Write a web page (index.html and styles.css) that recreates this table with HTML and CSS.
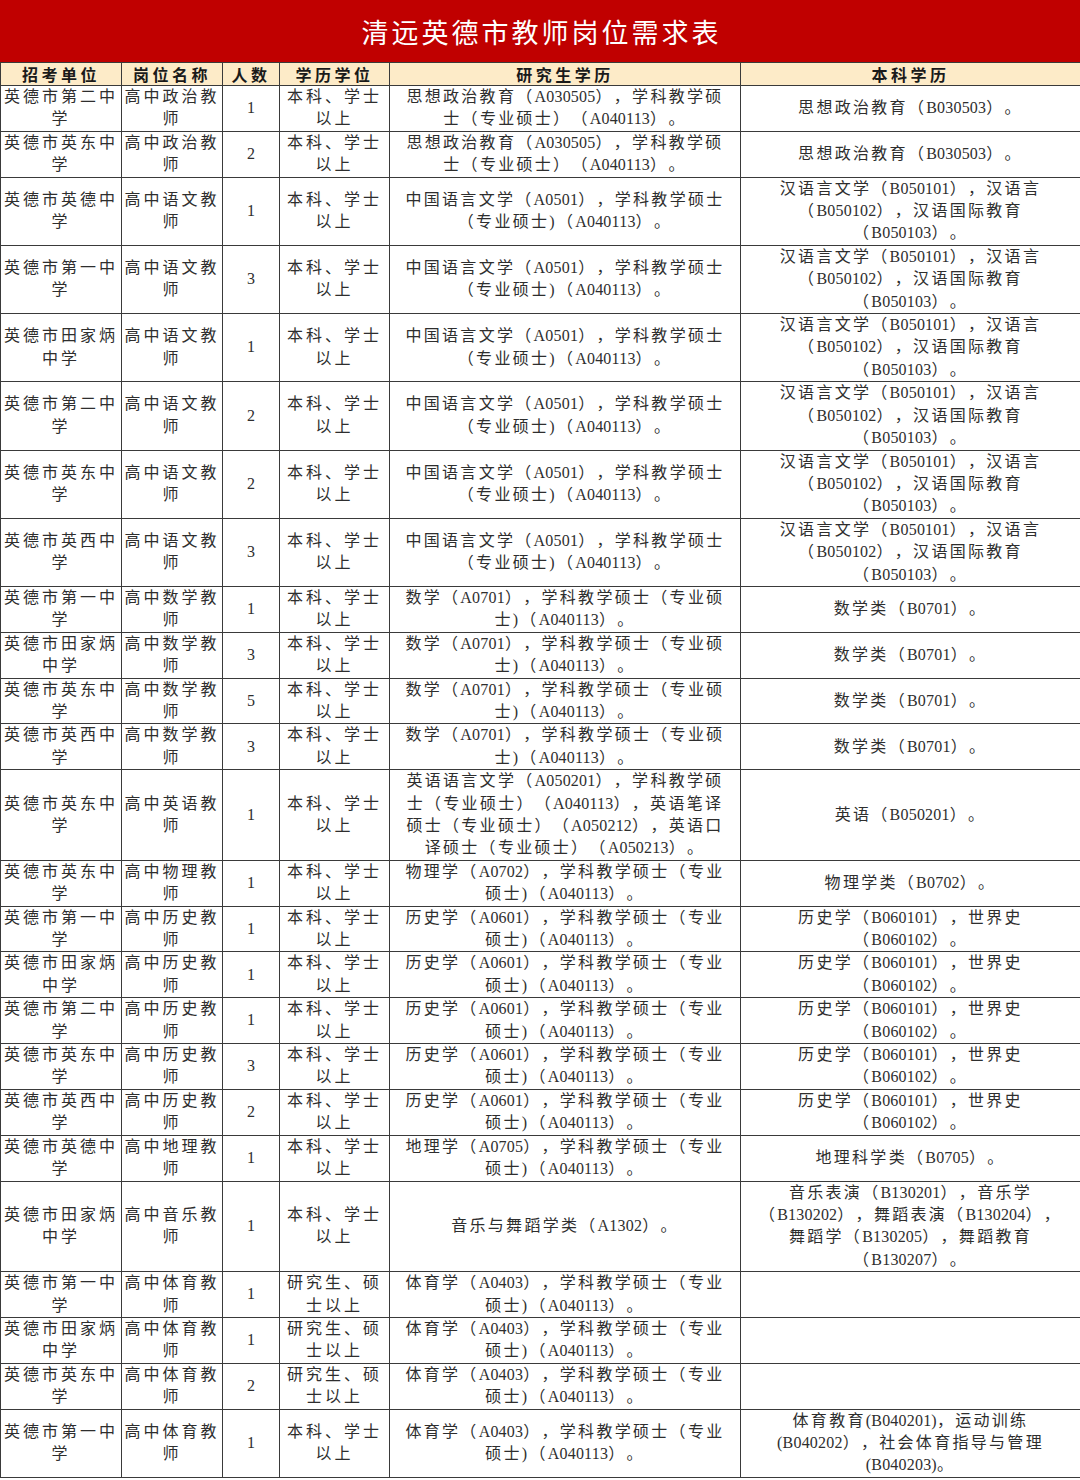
FILE: index.html
```html
<!DOCTYPE html>
<html lang="zh-CN">
<head>
<meta charset="utf-8">
<title>清远英德市教师岗位需求表</title>
<link rel="stylesheet" href="styles.css">
</head>
<body>
<div class="page">
  <div class="title">清远英德市教师岗位需求表</div>
  <table class="grid">
    <colgroup>
      <col class="c1"><col class="c2"><col class="c3"><col class="c4"><col class="c5"><col class="c6">
    </colgroup>
    <thead>
      <tr class="head">
        <th>招考单位</th><th>岗位名称</th><th>人数</th><th>学历学位</th><th>研究生学历</th><th>本科学历</th>
      </tr>
    </thead>
    <tbody>
      <tr><td class="w">英德市第二中<br>学</td><td class="w">高中政治教<br>师</td><td class="n">1</td><td class="w">本科、学士<br>以上</td><td>思想政治教育（<span class="c">A030505</span>），学科教学硕<br>士（专业硕士）（<span class="c">A040113</span>）。</td><td>思想政治教育（<span class="c">B030503</span>）。</td></tr>
      <tr><td class="w">英德市英东中<br>学</td><td class="w">高中政治教<br>师</td><td class="n">2</td><td class="w">本科、学士<br>以上</td><td>思想政治教育（<span class="c">A030505</span>），学科教学硕<br>士（专业硕士）（<span class="c">A040113</span>）。</td><td>思想政治教育（<span class="c">B030503</span>）。</td></tr>
      <tr><td class="w">英德市英德中<br>学</td><td class="w">高中语文教<br>师</td><td class="n">1</td><td class="w">本科、学士<br>以上</td><td>中国语言文学（<span class="c">A0501</span>），学科教学硕士<br>（专业硕士)（<span class="c">A040113</span>）。</td><td>汉语言文学（<span class="c">B050101</span>），汉语言<br>（<span class="c">B050102</span>），汉语国际教育<br>（<span class="c">B050103</span>）。</td></tr>
      <tr><td class="w">英德市第一中<br>学</td><td class="w">高中语文教<br>师</td><td class="n">3</td><td class="w">本科、学士<br>以上</td><td>中国语言文学（<span class="c">A0501</span>），学科教学硕士<br>（专业硕士)（<span class="c">A040113</span>）。</td><td>汉语言文学（<span class="c">B050101</span>），汉语言<br>（<span class="c">B050102</span>），汉语国际教育<br>（<span class="c">B050103</span>）。</td></tr>
      <tr><td class="w">英德市田家炳<br>中学</td><td class="w">高中语文教<br>师</td><td class="n">1</td><td class="w">本科、学士<br>以上</td><td>中国语言文学（<span class="c">A0501</span>），学科教学硕士<br>（专业硕士)（<span class="c">A040113</span>）。</td><td>汉语言文学（<span class="c">B050101</span>），汉语言<br>（<span class="c">B050102</span>），汉语国际教育<br>（<span class="c">B050103</span>）。</td></tr>
      <tr><td class="w">英德市第二中<br>学</td><td class="w">高中语文教<br>师</td><td class="n">2</td><td class="w">本科、学士<br>以上</td><td>中国语言文学（<span class="c">A0501</span>），学科教学硕士<br>（专业硕士)（<span class="c">A040113</span>）。</td><td>汉语言文学（<span class="c">B050101</span>），汉语言<br>（<span class="c">B050102</span>），汉语国际教育<br>（<span class="c">B050103</span>）。</td></tr>
      <tr><td class="w">英德市英东中<br>学</td><td class="w">高中语文教<br>师</td><td class="n">2</td><td class="w">本科、学士<br>以上</td><td>中国语言文学（<span class="c">A0501</span>），学科教学硕士<br>（专业硕士)（<span class="c">A040113</span>）。</td><td>汉语言文学（<span class="c">B050101</span>），汉语言<br>（<span class="c">B050102</span>），汉语国际教育<br>（<span class="c">B050103</span>）。</td></tr>
      <tr><td class="w">英德市英西中<br>学</td><td class="w">高中语文教<br>师</td><td class="n">3</td><td class="w">本科、学士<br>以上</td><td>中国语言文学（<span class="c">A0501</span>），学科教学硕士<br>（专业硕士)（<span class="c">A040113</span>）。</td><td>汉语言文学（<span class="c">B050101</span>），汉语言<br>（<span class="c">B050102</span>），汉语国际教育<br>（<span class="c">B050103</span>）。</td></tr>
      <tr><td class="w">英德市第一中<br>学</td><td class="w">高中数学教<br>师</td><td class="n">1</td><td class="w">本科、学士<br>以上</td><td>数学（<span class="c">A0701</span>），学科教学硕士（专业硕<br>士)（<span class="c">A040113</span>）。</td><td>数学类（<span class="c">B0701</span>）。</td></tr>
      <tr><td class="w">英德市田家炳<br>中学</td><td class="w">高中数学教<br>师</td><td class="n">3</td><td class="w">本科、学士<br>以上</td><td>数学（<span class="c">A0701</span>），学科教学硕士（专业硕<br>士)（<span class="c">A040113</span>）。</td><td>数学类（<span class="c">B0701</span>）。</td></tr>
      <tr><td class="w">英德市英东中<br>学</td><td class="w">高中数学教<br>师</td><td class="n">5</td><td class="w">本科、学士<br>以上</td><td>数学（<span class="c">A0701</span>），学科教学硕士（专业硕<br>士)（<span class="c">A040113</span>）。</td><td>数学类（<span class="c">B0701</span>）。</td></tr>
      <tr><td class="w">英德市英西中<br>学</td><td class="w">高中数学教<br>师</td><td class="n">3</td><td class="w">本科、学士<br>以上</td><td>数学（<span class="c">A0701</span>），学科教学硕士（专业硕<br>士)（<span class="c">A040113</span>）。</td><td>数学类（<span class="c">B0701</span>）。</td></tr>
      <tr><td class="w">英德市英东中<br>学</td><td class="w">高中英语教<br>师</td><td class="n">1</td><td class="w">本科、学士<br>以上</td><td>英语语言文学（<span class="c">A050201</span>），学科教学硕<br>士（专业硕士）（<span class="c">A040113</span>），英语笔译<br>硕士（专业硕士）（<span class="c">A050212</span>），英语口<br>译硕士（专业硕士）（<span class="c">A050213</span>）。</td><td>英语（<span class="c">B050201</span>）。</td></tr>
      <tr><td class="w">英德市英东中<br>学</td><td class="w">高中物理教<br>师</td><td class="n">1</td><td class="w">本科、学士<br>以上</td><td>物理学（<span class="c">A0702</span>），学科教学硕士（专业<br>硕士)（<span class="c">A040113</span>）。</td><td>物理学类（<span class="c">B0702</span>）。</td></tr>
      <tr><td class="w">英德市第一中<br>学</td><td class="w">高中历史教<br>师</td><td class="n">1</td><td class="w">本科、学士<br>以上</td><td>历史学（<span class="c">A0601</span>），学科教学硕士（专业<br>硕士)（<span class="c">A040113</span>）。</td><td>历史学（<span class="c">B060101</span>），世界史<br>（<span class="c">B060102</span>）。</td></tr>
      <tr><td class="w">英德市田家炳<br>中学</td><td class="w">高中历史教<br>师</td><td class="n">1</td><td class="w">本科、学士<br>以上</td><td>历史学（<span class="c">A0601</span>），学科教学硕士（专业<br>硕士)（<span class="c">A040113</span>）。</td><td>历史学（<span class="c">B060101</span>），世界史<br>（<span class="c">B060102</span>）。</td></tr>
      <tr><td class="w">英德市第二中<br>学</td><td class="w">高中历史教<br>师</td><td class="n">1</td><td class="w">本科、学士<br>以上</td><td>历史学（<span class="c">A0601</span>），学科教学硕士（专业<br>硕士)（<span class="c">A040113</span>）。</td><td>历史学（<span class="c">B060101</span>），世界史<br>（<span class="c">B060102</span>）。</td></tr>
      <tr><td class="w">英德市英东中<br>学</td><td class="w">高中历史教<br>师</td><td class="n">3</td><td class="w">本科、学士<br>以上</td><td>历史学（<span class="c">A0601</span>），学科教学硕士（专业<br>硕士)（<span class="c">A040113</span>）。</td><td>历史学（<span class="c">B060101</span>），世界史<br>（<span class="c">B060102</span>）。</td></tr>
      <tr><td class="w">英德市英西中<br>学</td><td class="w">高中历史教<br>师</td><td class="n">2</td><td class="w">本科、学士<br>以上</td><td>历史学（<span class="c">A0601</span>），学科教学硕士（专业<br>硕士)（<span class="c">A040113</span>）。</td><td>历史学（<span class="c">B060101</span>），世界史<br>（<span class="c">B060102</span>）。</td></tr>
      <tr><td class="w">英德市英德中<br>学</td><td class="w">高中地理教<br>师</td><td class="n">1</td><td class="w">本科、学士<br>以上</td><td>地理学（<span class="c">A0705</span>），学科教学硕士（专业<br>硕士)（<span class="c">A040113</span>）。</td><td>地理科学类（<span class="c">B0705</span>）。</td></tr>
      <tr><td class="w">英德市田家炳<br>中学</td><td class="w">高中音乐教<br>师</td><td class="n">1</td><td class="w">本科、学士<br>以上</td><td>音乐与舞蹈学类（<span class="c">A1302</span>）。</td><td>音乐表演（<span class="c">B130201</span>），音乐学<br>（<span class="c">B130202</span>），舞蹈表演（<span class="c">B130204</span>），<br>舞蹈学（<span class="c">B130205</span>），舞蹈教育<br>（<span class="c">B130207</span>）。</td></tr>
      <tr><td class="w">英德市第一中<br>学</td><td class="w">高中体育教<br>师</td><td class="n">1</td><td class="w">研究生、硕<br>士以上</td><td>体育学（<span class="c">A0403</span>），学科教学硕士（专业<br>硕士)（<span class="c">A040113</span>）。</td><td></td></tr>
      <tr><td class="w">英德市田家炳<br>中学</td><td class="w">高中体育教<br>师</td><td class="n">1</td><td class="w">研究生、硕<br>士以上</td><td>体育学（<span class="c">A0403</span>），学科教学硕士（专业<br>硕士)（<span class="c">A040113</span>）。</td><td></td></tr>
      <tr><td class="w">英德市英东中<br>学</td><td class="w">高中体育教<br>师</td><td class="n">2</td><td class="w">研究生、硕<br>士以上</td><td>体育学（<span class="c">A0403</span>），学科教学硕士（专业<br>硕士)（<span class="c">A040113</span>）。</td><td></td></tr>
      <tr><td class="w">英德市第一中<br>学</td><td class="w">高中体育教<br>师</td><td class="n">1</td><td class="w">本科、学士<br>以上</td><td>体育学（<span class="c">A0403</span>），学科教学硕士（专业<br>硕士)（<span class="c">A040113</span>）。</td><td>体育教育<span class="c">(B040201)</span>，运动训练<br><span class="c">(B040202</span>），社会体育指导与管理<br><span class="c">(B040203)</span>。</td></tr>
    </tbody>
  </table>
</div>
</body>
</html>
```

FILE: styles.css
```css
html, body {
  margin: 0;
  padding: 0;
  background: #ffffff;
}

.page {
  width: 1080px;
  font-family: "Liberation Serif", "Noto Sans CJK SC", serif;
  color: #2e2e2e;
  text-spacing-trim: space-all;
}

.title {
  height: 62px;
  background: #c00000;
  color: #ffffff;
  font-family: "Noto Sans CJK SC", sans-serif;
  font-size: 27px;
  letter-spacing: 3px;
  padding-left: 3px;
  display: flex;
  align-items: center;
  justify-content: center;
  box-sizing: border-box;
}

.grid {
  width: 1080px;
  border-collapse: collapse;
  table-layout: fixed;
}

.c1 { width: 121px; }
.c2 { width: 101px; }
.c3 { width: 57px; }
.c4 { width: 110px; }
.c5 { width: 351px; }
.c6 { width: 340px; }

.grid th,
.grid td {
  border: 1px solid #3a3a3a;
  padding: 0;
  text-align: center;
  vertical-align: middle;
  white-space: nowrap;
  overflow: hidden;
}

.grid th {
  background: #fdebc8;
  font-family: "Noto Sans CJK SC", sans-serif;
  font-weight: 700;
  font-size: 16px;
  letter-spacing: 3.5px;
  line-height: 22px;
  color: #1a1a1a;
}

.grid td {
  font-size: 16px;
  letter-spacing: 2.3px;
  line-height: 22.4px;
}

.grid td.w {
  letter-spacing: 3px;
}

.grid td.n {
  letter-spacing: 0;
}

.c {
  letter-spacing: 0.2px;
}
```
